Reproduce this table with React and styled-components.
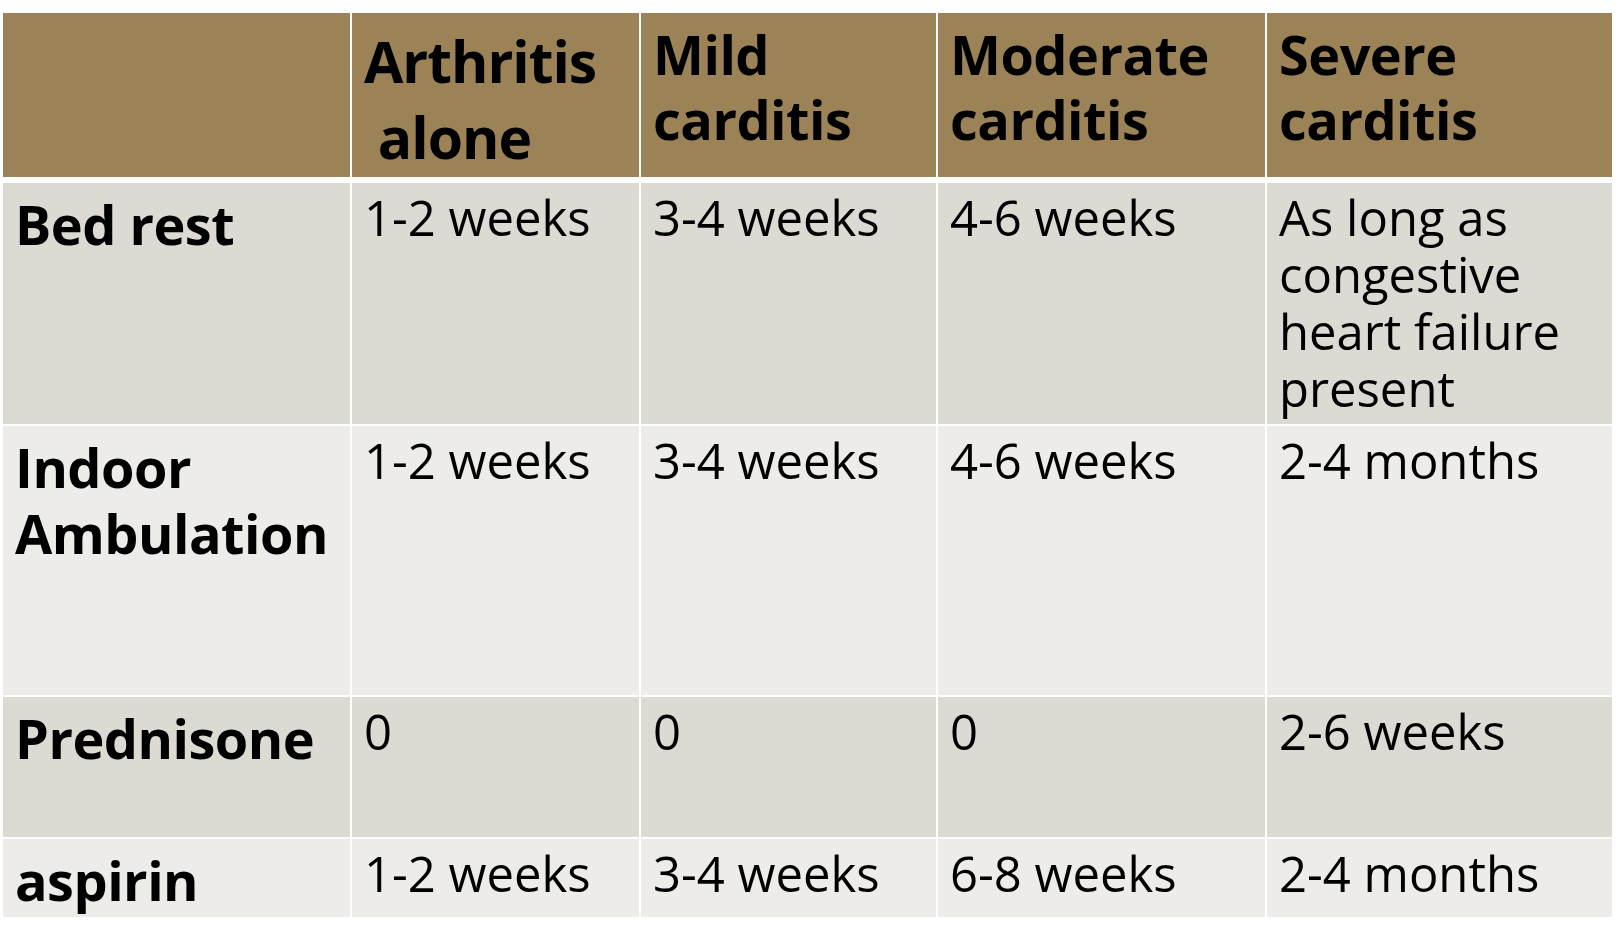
import React from 'react';
import styled, { createGlobalStyle } from 'styled-components';

const GlobalStyle = createGlobalStyle`
    html, body {
        margin: 0;
        padding: 0;
        background: #ffffff;
    }
    body {
        font-family: "Open Sans", "Liberation Sans", sans-serif;
        color: #000000;
    }
`;

const Page = styled.div`
    width: 1618px;
    height: 948px;
    padding: 13px 0 0 3px;
    box-sizing: border-box;
`;

const Grid = styled.div`
    display: grid;
    grid-template-columns: 347px 287px 295px 327px 345px;
    grid-template-rows: 168px 241px 269px 140px 78px;
    column-gap: 2px;
    row-gap: 2px;
    width: 1609px;
    background: #ffffff;
`;

const kinds = {
    head: { size: 54, line: 65, pad: 9, weight: 700 },
    big: { size: 57, line: 76, pad: 10, weight: 700 },
    label: { size: 54, line: 66, pad: 8, weight: 700 },
    body: { size: 49, line: 57, pad: 6, weight: 400 },
};

const shades = {
    head: '#9b8357',
    dark: '#ddd9d3',
    light: '#eeece8',
};

const Cell = styled.div`
    background: ${(p) => shades[p.$shade]};
    font-size: ${(p) => kinds[p.$kind].size}px;
    line-height: ${(p) => kinds[p.$kind].line}px;
    font-weight: ${(p) => kinds[p.$kind].weight};
    padding: ${(p) => kinds[p.$kind].pad}px 8px 0 12px;
    letter-spacing: ${(p) => (p.$kind === 'body' ? '0' : p.$kind === 'big' ? '-1px' : '-0.5px')};
    box-sizing: border-box;
    margin-bottom: ${(p) => (p.$shade === 'head' ? '4px' : '0')};
`;

const headers = [
    { text: '', kind: 'head' },
    { text: <>Arthritis<br />&nbsp;alone</>, kind: 'big' },
    { text: 'Mild carditis', kind: 'head' },
    { text: 'Moderate carditis', kind: 'head' },
    { text: 'Severe carditis', kind: 'head' },
];

const rows = [
    {
        label: 'Bed rest',
        shade: 'dark',
        values: ['1-2 weeks', '3-4 weeks', '4-6 weeks', 'As long as congestive heart failure present'],
    },
    {
        label: 'Indoor Ambulation',
        shade: 'light',
        values: ['1-2 weeks', '3-4 weeks', '4-6 weeks', '2-4 months'],
    },
    {
        label: 'Prednisone',
        shade: 'dark',
        values: ['0', '0', '0', '2-6 weeks'],
    },
    {
        label: 'aspirin',
        shade: 'light',
        values: ['1-2 weeks', '3-4 weeks', '6-8 weeks', '2-4 months'],
    },
];

const App = () => {
    return (
        <Page>
            <GlobalStyle />
            <Grid>
                {headers.map((h, i) => (
                    <Cell key={`h${i}`} $shade="head" $kind={h.kind}>
                        {h.text}
                    </Cell>
                ))}
                {rows.map((row) => (
                    <React.Fragment key={row.label}>
                        <Cell $shade={row.shade} $kind="label">
                            {row.label}
                        </Cell>
                        {row.values.map((v, i) => (
                            <Cell key={i} $shade={row.shade} $kind="body">
                                {v}
                            </Cell>
                        ))}
                    </React.Fragment>
                ))}
            </Grid>
        </Page>
    );
};

export default App;
